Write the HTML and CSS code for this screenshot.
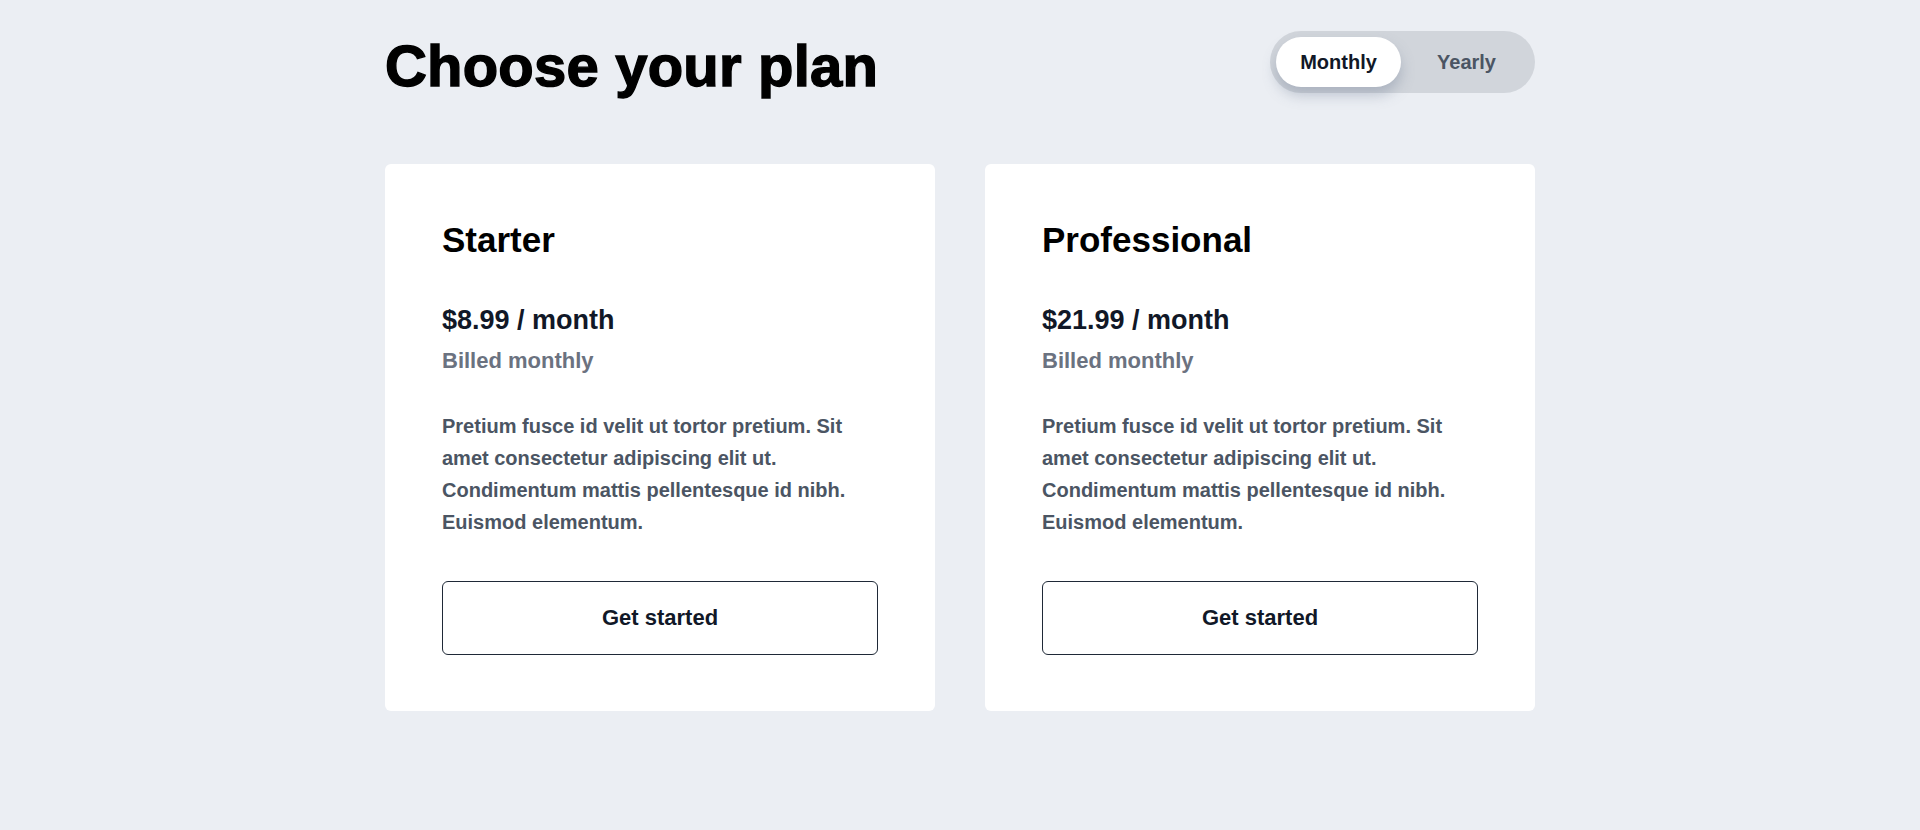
FILE: index.html
```html
<!DOCTYPE html>
<html lang="en">
<head>
<meta charset="utf-8">
<title>Choose your plan</title>
<link rel="stylesheet" href="styles.css">
</head>
<body>
<main class="page">
  <header class="header">
    <h1 class="title">Choose your plan</h1>
    <div class="toggle">
      <button class="toggle-btn active">Monthly</button>
      <button class="toggle-btn">Yearly</button>
    </div>
  </header>
  <section class="plans">
    <article class="card">
      <h2 class="plan-name">Starter</h2>
      <p class="price">$8.99 / month</p>
      <p class="billed">Billed monthly</p>
      <p class="desc">Pretium fusce id velit ut tortor pretium. Sit amet consectetur adipiscing elit ut. Condimentum mattis pellentesque id nibh. Euismod elementum.</p>
      <button class="cta">Get started</button>
    </article>
    <article class="card">
      <h2 class="plan-name">Professional</h2>
      <p class="price">$21.99 / month</p>
      <p class="billed">Billed monthly</p>
      <p class="desc">Pretium fusce id velit ut tortor pretium. Sit amet consectetur adipiscing elit ut. Condimentum mattis pellentesque id nibh. Euismod elementum.</p>
      <button class="cta">Get started</button>
    </article>
  </section>
</main>
</body>
</html>
```

FILE: styles.css
```css
* { box-sizing: border-box; }
html, body { margin: 0; padding: 0; }
body {
  background: #ebeef3;
  font-family: "Liberation Sans", Arial, sans-serif;
  font-weight: 700;
  color: #111827;
}
.page {
  width: 1150px;
  margin: 0 auto;
  padding-top: 31px;
}
.header {
  display: flex;
  justify-content: space-between;
  align-items: flex-start;
}
.title {
  margin: 1px 0 0;
  font-size: 58px;
  font-weight: 700;
  color: #000;
  line-height: normal;
  -webkit-text-stroke: 1.4px #000;
  letter-spacing: 0.2px;
}
.toggle {
  display: flex;
  background: #d1d5db;
  border-radius: 31px;
  padding: 6px;
  gap: 3px;
}
.toggle-btn {
  font-family: inherit;
  font-weight: 700;
  font-size: 20px;
  line-height: 30px;
  padding: 10px 0;
  width: 125px;
  border: none;
  border-radius: 25px;
  background: transparent;
  color: #4b5563;
  cursor: pointer;
}
.toggle-btn.active {
  background: #fff;
  color: #111827;
  box-shadow: 0 8px 14px rgba(100, 116, 139, 0.35);
}
.plans {
  display: grid;
  grid-template-columns: 1fr 1fr;
  gap: 50px;
  margin-top: 65px;
}
.card {
  background: #fff;
  border-radius: 6px;
  padding: 56px 57px 56px 57px;
  display: flex;
  flex-direction: column;
}
.plan-name {
  margin: 0 0 45px;
  font-size: 35px;
  line-height: normal;
  color: #000;
}
.price {
  margin: 0 0 12px;
  font-size: 27px;
  line-height: normal;
  color: #111827;
}
.billed {
  margin: 0 0 36px;
  font-size: 22px;
  line-height: normal;
  color: #6b7280;
}
.desc {
  margin: 0 0 43px;
  font-size: 20px;
  line-height: 32px;
  color: #4b5563;
}
.cta {
  font-family: inherit;
  font-weight: 700;
  font-size: 22px;
  line-height: 32px;
  padding: 20px 0;
  width: 100%;
  background: #fff;
  color: #111827;
  border: 1px solid #1f2937;
  border-radius: 6px;
  cursor: pointer;
}
```
